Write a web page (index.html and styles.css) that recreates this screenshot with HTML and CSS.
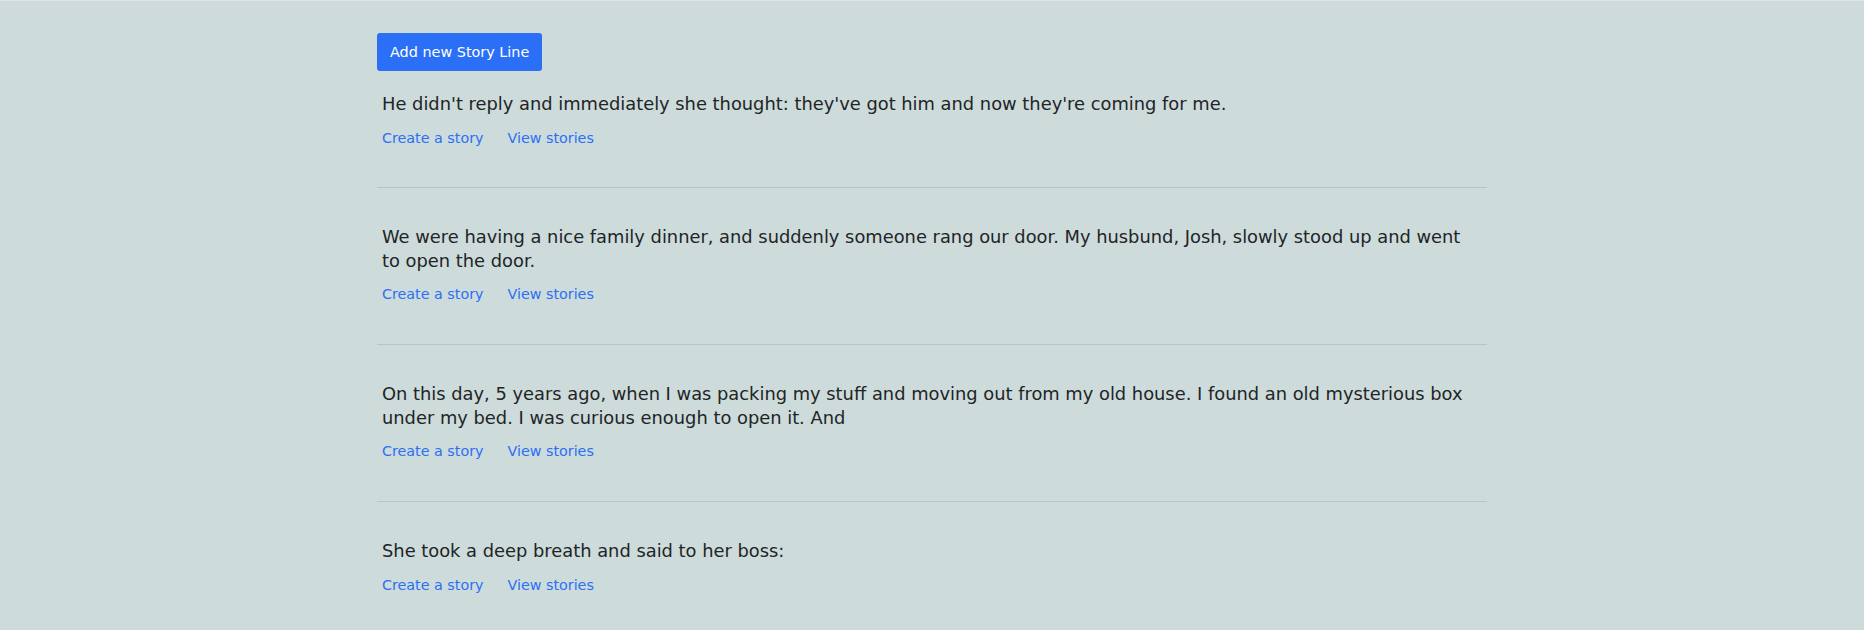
FILE: index.html
```html
<!DOCTYPE html>
<html lang="en">
<head>
<meta charset="utf-8">
<title>Story Lines</title>
<link rel="stylesheet" href="styles.css">
</head>
<body>
<div class="page">
  <main class="container">
    <button class="btn-add" type="button">Add new Story Line</button>
    <section class="story">
      <p class="story-text">He didn't reply and immediately she thought: they've got him and now they're coming for me.</p>
      <div class="story-links"><a href="#">Create a story</a><a href="#">View stories</a></div>
    </section>
    <hr class="divider">
    <section class="story">
      <p class="story-text">We were having a nice family dinner, and suddenly someone rang our door. My husbund, Josh, slowly stood up and went to open the door.</p>
      <div class="story-links"><a href="#">Create a story</a><a href="#">View stories</a></div>
    </section>
    <hr class="divider">
    <section class="story">
      <p class="story-text">On this day, 5 years ago, when I was packing my stuff and moving out from my old house. I found an old mysterious box under my bed. I was curious enough to open it. And</p>
      <div class="story-links"><a href="#">Create a story</a><a href="#">View stories</a></div>
    </section>
    <hr class="divider">
    <section class="story">
      <p class="story-text">She took a deep breath and said to her boss:</p>
      <div class="story-links"><a href="#">Create a story</a><a href="#">View stories</a></div>
    </section>
  </main>
</div>
</body>
</html>
```
FILE: styles.css
```css
html, body {
  margin: 0;
  padding: 0;
  height: 100%;
}
body {
  background: #cddbdb;
  font-family: "DejaVu Sans", sans-serif;
  color: #222426;
}
.page {
  border-top: 1px solid #dde4e4;
  min-height: 100%;
  box-sizing: border-box;
}
.container {
  width: 1110px;
  margin: 0 auto;
  padding-top: 32px;
}
.btn-add {
  display: block;
  height: 38px;
  padding: 0 13px;
  border: none;
  border-radius: 3px;
  background: #2b6ff6;
  color: #fff;
  font-family: inherit;
  font-size: 14.4px;
  cursor: pointer;
}
.story {
  padding: 0 5px;
}
.story-text {
  margin: 0;
  padding-top: 21px;
  font-size: 17.85px;
  line-height: 23.4px;
}
.divider + .story .story-text {
  padding-top: 37.3px;
}
.story-links {
  display: flex;
  gap: 24px;
  margin-top: 12.2px;
  font-size: 14.3px;
  line-height: 21px;
}
.story-links a {
  color: #2b6ff6;
  text-decoration: none;
}
.divider {
  margin: 38.5px 0 0;
  border: 0;
  border-top: 1px solid #b7c5c6;
}
```
